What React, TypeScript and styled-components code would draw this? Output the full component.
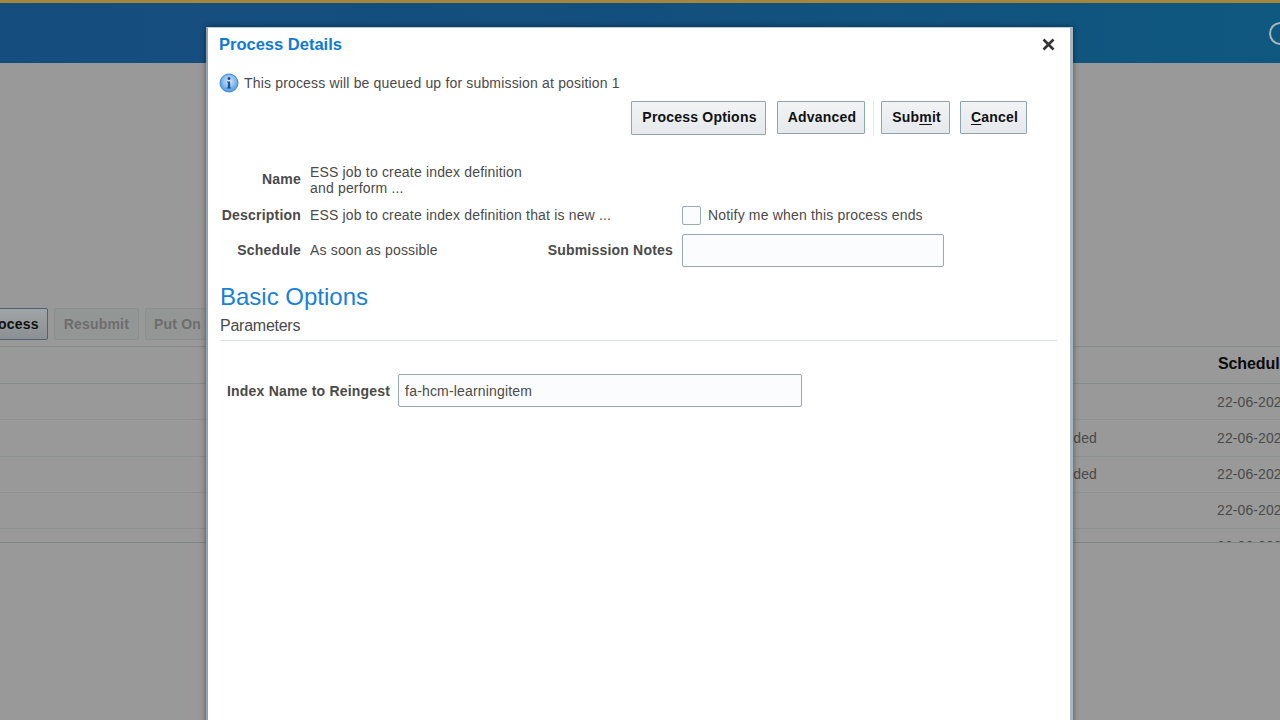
import React from "react";
import styled, { createGlobalStyle } from "styled-components";

const GlobalStyle = createGlobalStyle`
  html, body {
    margin: 0;
    padding: 0;
    height: 100%;
    overflow: hidden;
    background: #999999;
    font-family: "Liberation Sans", Arial, sans-serif;
  }
`;

const Page = styled.div`
  position: relative;
  width: 1280px;
  height: 720px;
  overflow: hidden;
  background: #999999;
`;

const Header = styled.header`
  height: 60px;
  border-top: 3px solid #a5863a;
  background: linear-gradient(90deg, #164d7f 0%, #134f7e 50%, #0f587f 100%);
  overflow: hidden;
  display: flex;
  justify-content: flex-end;
  align-items: center;
`;

const SearchRing = styled.div`
  width: 19px;
  height: 19px;
  flex: none;
  margin-right: -12px;
  border: 2px solid #a9b4bb;
  border-radius: 50%;
`;

const Toolbar = styled.div`
  display: flex;
  gap: 6px;
  margin: 245px 0 0 -79.5px;
  height: 33px;
`;

const ToolButton = styled.div<{ $active?: boolean }>`
  height: 32px;
  line-height: 30px;
  box-sizing: border-box;
  padding: 0 8.5px;
  border: 1px solid ${p => (p.$active ? "#4d6475" : "#8d9090")};
  border-radius: 2px;
  background: ${p => (p.$active ? "linear-gradient(#a1a4a6, #8d9092)" : "#949696")};
  color: ${p => (p.$active ? "#111" : "#6d6d6d")};
  font-size: 14px;
  font-weight: 700;
  letter-spacing: 0.2px;
  white-space: nowrap;
`;

const Table = styled.div`
  margin-top: 5px;
  height: 197px;
  border-top: 1px solid #858a8a;
  border-bottom: 1px solid #7f8484;
  box-sizing: border-box;
  overflow: hidden;
`;

const Row = styled.div<{ $height: number; $head?: boolean; $lift?: number }>`
  display: grid;
  grid-template-columns: 1026px 191px 1fr;
  align-items: center;
  height: ${p => p.$height}px;
  box-sizing: border-box;
  padding-bottom: ${p => p.$lift ?? 0}px;
  border-bottom: 1px solid ${p => (p.$head ? "#868b8b" : "#8e9191")};
  color: ${p => (p.$head ? "#0c0c0c" : "#4a4a4a")};
  font-size: ${p => (p.$head ? "16px" : "14px")};
  font-weight: ${p => (p.$head ? 700 : 400)};
  letter-spacing: ${p => (p.$head ? "-0.1px" : "0.1px")};
  white-space: nowrap;
`;

const HeadCell = styled.span`
  margin-left: 1px;
`;

const Dialog = styled.section`
  position: absolute;
  left: 206px;
  top: 27px;
  width: 867px;
  height: 720px;
  box-sizing: border-box;
  background: #fff;
  border-top: 1px solid #c0c8d0;
  border-left: 2px solid #8fa0b0;
  border-right: 3px solid #a9b5c0;
  box-shadow: 0 0 6px rgba(0, 0, 0, 0.45);
  padding: 0 12px 0 11px;
  color: #4a4a4a;
  font-size: 14px;
  letter-spacing: 0.17px;
`;

const TitleBar = styled.div`
  display: flex;
  justify-content: space-between;
  align-items: center;
  height: 33px;
  padding-right: 3px;
`;

const Title = styled.h1`
  margin: 0;
  font-size: 16.5px;
  font-weight: 700;
  letter-spacing: 0;
  color: #0f7ad4;
`;

const InfoRow = styled.div`
  display: flex;
  align-items: center;
  gap: 5px;
  margin-top: 13px;
  height: 17px;
`;

const ButtonRow = styled.div`
  display: flex;
  justify-content: flex-end;
  align-items: flex-start;
  margin-top: 10px;
  padding-right: 31px;
`;

const ActionButton = styled.div<{ $width: number; $tall?: boolean; $gap?: number }>`
  box-sizing: border-box;
  width: ${p => p.$width}px;
  height: ${p => (p.$tall ? "34px" : "33px")};
  margin-left: ${p => p.$gap ?? 0}px;
  padding-left: 2px;
  line-height: 31px;
  border: 1px solid #8fa3b3;
  border-radius: 1px;
  background: linear-gradient(#f1f3f5, #e6e9ec);
  color: #111;
  font-size: 14px;
  font-weight: 700;
  letter-spacing: 0.2px;
  text-align: center;
  white-space: nowrap;
  u {
    text-underline-offset: 2px;
  }
`;

const ButtonDivider = styled.div`
  width: 1px;
  height: 34px;
  background: #e1e6ea;
  margin: 0 7px 0 8px;
`;

const FormGrid = styled.div`
  display: grid;
  grid-template-columns: 81px 230px 124px 1fr;
  column-gap: 9px;
  margin-top: 29px;
  margin-left: 1px;
  align-items: center;
`;

const FieldLabel = styled.div<{ $lift?: number }>`
  justify-self: end;
  padding-bottom: ${p => p.$lift ?? 0}px;
  font-weight: 700;
  letter-spacing: 0.2px;
  white-space: nowrap;
  color: #4a4a4a;
`;

const FieldValue = styled.div<{ $span?: number; $lift?: number }>`
  line-height: 16px;
  white-space: nowrap;
  padding-bottom: ${p => p.$lift ?? 0}px;
  grid-column: span ${p => p.$span ?? 1};
`;

const SpacedRow = styled.div`
  display: contents;
  & > * {
    margin-bottom: 10px;
  }
`;

const NotifyWrap = styled.label`
  display: flex;
  align-items: center;
  gap: 7px;
  height: 18px;
`;

const CheckBox = styled.span`
  width: 19px;
  height: 19px;
  box-sizing: border-box;
  border: 1px solid #9aabb8;
  border-radius: 2px;
  background: #fbfcfd;
`;

const TextBox = styled.div<{ $width: number }>`
  width: ${p => p.$width}px;
  height: 33px;
  box-sizing: border-box;
  border: 1px solid #98a8b5;
  border-radius: 2px;
  background: #fbfcfe;
  padding: 0 6px;
  line-height: 32px;
  font-size: 14px;
  color: #4a4a4a;
`;

const SectionHeading = styled.h2`
  margin: 15px 0 0 1px;
  font-size: 24px;
  line-height: 30px;
  font-weight: 400;
  letter-spacing: 0;
  color: #1a7fd6;
`;

const SubHeading = styled.h3`
  margin: 4px 0 0 1px;
  padding-bottom: 4px;
  height: 20px;
  line-height: 20px;
  font-size: 16px;
  font-weight: 400;
  letter-spacing: -0.25px;
  color: #4a4a4a;
  border-bottom: 1px solid #dde3e8;
`;

const ParamRow = styled.div`
  display: flex;
  align-items: center;
  gap: 8px;
  margin: 33px 0 0 8px;
`;

const InfoIcon = () => (
  <svg width="20" height="20" viewBox="0 0 20 20">
    <defs>
      <radialGradient id="infoFill" cx="50%" cy="40%" r="60%">
        <stop offset="0%" stopColor="#d9ecfb" />
        <stop offset="100%" stopColor="#4b97e0" />
      </radialGradient>
    </defs>
    <circle cx="10" cy="10" r="9" fill="url(#infoFill)" stroke="#3f86cf" strokeWidth="1" />
    <circle cx="10" cy="5.6" r="1.5" fill="#174f9c" />
    <path d="M8 8.4h3.1v6h1.1v1.2H7.8v-1.2h1.1V9.6H8z" fill="#174f9c" />
  </svg>
);

const CloseIcon = () => (
  <svg width="13" height="13" viewBox="0 0 13 13">
    <path d="M1.5 1.5l10 10M11.5 1.5l-10 10" stroke="#333" strokeWidth="2.6" />
  </svg>
);

const rows = [
  { height: 36, status: "", date: "22-06-2023", lift: 0 },
  { height: 37, status: "Succeeded", date: "22-06-2023", lift: 1 },
  { height: 36, status: "Succeeded", date: "22-06-2023", lift: 2 },
  { height: 36, status: "", date: "22-06-2023", lift: 2 },
  { height: 36, status: "", date: "22-06-2023", lift: 2 }
];

const App = () => (
  <Page>
    <GlobalStyle />
    <Header>
      <SearchRing />
    </Header>
    <Toolbar>
      <ToolButton $active>Submit Process</ToolButton>
      <ToolButton>Resubmit</ToolButton>
      <ToolButton>Put On Hold</ToolButton>
    </Toolbar>
    <Table>
      <Row $height={37} $head $lift={2}>
        <span />
        <span />
        <HeadCell>Scheduled Time</HeadCell>
      </Row>
      {rows.map((row, i) => (
        <Row key={i} $height={row.height} $lift={row.lift}>
          <span />
          <span>{row.status}</span>
          <span>{row.date}</span>
        </Row>
      ))}
    </Table>

    <Dialog>
      <TitleBar>
        <Title>Process Details</Title>
        <CloseIcon />
      </TitleBar>
      <InfoRow>
        <InfoIcon />
        This process will be queued up for submission at position 1
      </InfoRow>
      <ButtonRow>
        <ActionButton $width={135} $tall>Process Options</ActionButton>
        <ActionButton $width={88} $gap={11}>Advanced</ActionButton>
        <ButtonDivider />
        <ActionButton $width={69}>Sub<u>m</u>it</ActionButton>
        <ActionButton $width={67} $gap={10}><u>C</u>ancel</ActionButton>
      </ButtonRow>
      <FormGrid>
        <SpacedRow>
          <FieldLabel $lift={3}>Name</FieldLabel>
          <FieldValue $span={3}>
            ESS job to create index definition
            <br />
            and perform ...
          </FieldValue>
        </SpacedRow>
        <SpacedRow>
          <FieldLabel>Description</FieldLabel>
          <FieldValue $span={2}>ESS job to create index definition that is new ...</FieldValue>
          <NotifyWrap>
            <CheckBox />
            Notify me when this process ends
          </NotifyWrap>
        </SpacedRow>
        <FieldLabel $lift={2}>Schedule</FieldLabel>
        <FieldValue $lift={1}>As soon as possible</FieldValue>
        <FieldLabel $lift={2}>Submission Notes</FieldLabel>
        <TextBox $width={262} />
      </FormGrid>
      <SectionHeading>Basic Options</SectionHeading>
      <SubHeading>Parameters</SubHeading>
      <ParamRow>
        <FieldLabel>Index Name to Reingest</FieldLabel>
        <TextBox $width={404}>fa-hcm-learningitem</TextBox>
      </ParamRow>
    </Dialog>
  </Page>
);

export default App;
